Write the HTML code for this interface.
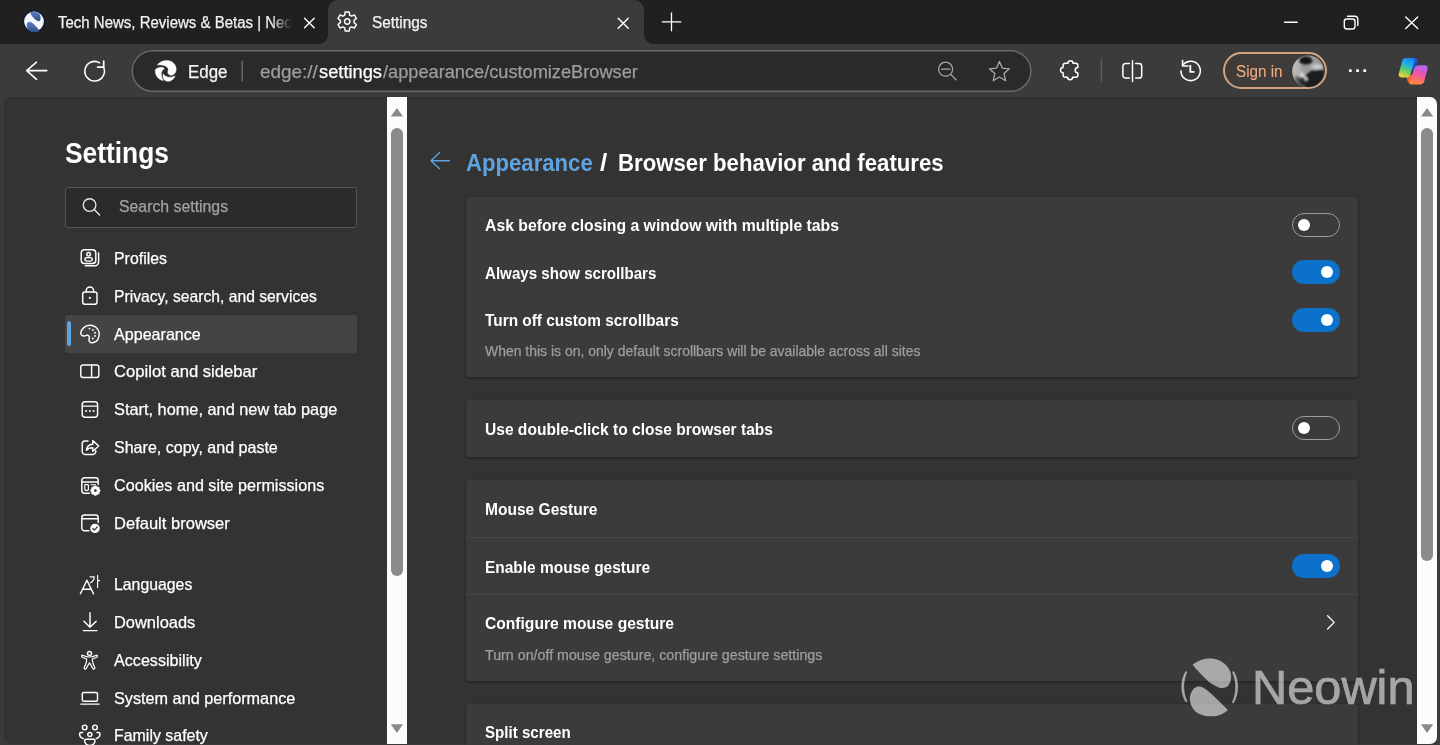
<!DOCTYPE html>
<html lang="en"><head><meta charset="utf-8"><title>Settings</title>
<style>
html,body{margin:0;padding:0}
body{width:1440px;height:745px;overflow:hidden;background:#3b3b3b;position:relative;font-family:"Liberation Sans",sans-serif;color:#fff}
.a{position:absolute}
.t{position:absolute;white-space:nowrap;line-height:1;transform-origin:0 50%}
svg{position:absolute;overflow:visible}
#tabstrip{left:0;top:0;width:1440px;height:44px;background:#202020}
#tabactive{left:328px;top:0;width:316px;height:44px;background:#3b3b3b;border-radius:10px 10px 0 0}
#tabactive:before,#tabactive:after{content:"";position:absolute;bottom:0;width:9px;height:9px}
#tabactive:before{left:-9px;background:radial-gradient(circle at 0 0,transparent 8.5px,#3b3b3b 9px)}
#tabactive:after{right:-9px;background:radial-gradient(circle at 100% 0,transparent 8.5px,#3b3b3b 9px)}
#tab1clip{left:0;top:0;width:297px;height:44px;overflow:hidden;-webkit-mask-image:linear-gradient(90deg,#000 271px,transparent 292px);mask-image:linear-gradient(90deg,#000 271px,transparent 292px)}
#omni{left:131.5px;top:50px;width:899px;height:42px;box-sizing:border-box;border:1.5px solid #6b6b6b;border-radius:21px;background:#2a2a2a}
#content{left:4px;top:97px;width:1433px;height:646.6px;background:#333;border-radius:8px;overflow:hidden;box-shadow:inset 0 1px 0 #2f2f2f}
.track{background:#fcfcfc}
.thumb{background:#8b8b8b;border-radius:6px}
#search{left:64.5px;top:187px;width:292.5px;height:40.5px;box-sizing:border-box;border:1px solid #565656;border-radius:3px;background:#2b2b2b}
#navsel{left:64.5px;top:314.5px;width:292.5px;height:38px;background:#444;border-radius:3px}
#navind{left:67px;top:320.8px;width:3.7px;height:25px;background:#5fa4e0;border-radius:2px}
.card{background:#3b3b3b;border-radius:4px;box-shadow:0 1.6px 3px rgba(0,0,0,.26),0 0 1px rgba(0,0,0,.12)}
.div{height:1px;background:#474747;left:466px;width:892px}
.tog{width:48px;height:24px;box-sizing:border-box;border-radius:12px;left:1292px}
.tog.off{border:1px solid #9c9c9c}
.tog.on{background:#0c71ca}
.tog i{position:absolute;width:12px;height:12px;border-radius:50%;background:#fff;top:50%;margin-top:-6px}
.tog.off i{left:5.2px}
.tog.on i{right:6.6px}
#signin{left:1222.5px;top:52.2px;width:104.2px;height:36.8px;box-sizing:border-box;border:2px solid #d0a383;border-radius:18.5px;background:#3e3b39}


</style></head>
<body>
<div class="a" id="tabstrip"></div>
<div class="a" id="tabactive"></div>
<div class="a" id="tab1clip"><span class="t" id="t0" style="left:58.3px;top:15.09px;font-size:15.6px;font-weight:400;color:#f2f2f2;transform:scaleX(0.9614);-webkit-text-stroke:.25px;"><span id="pfx">Tech News, Reviews &amp; Betas | </span>Neowin</span></div>
<div class="a" id="signin"></div>
<svg style="left:0;top:0" width="1440" height="100" viewBox="0 0 1440 100" fill="none" stroke="#fff" stroke-width="1.5" stroke-linecap="round" stroke-linejoin="round">
 <rect x="132.250" y="50.750" width="898.600" height="40.600" rx="20.300" fill="#2a2a2a" stroke="#686868" stroke-width="1.5"/>
 <!-- tab close buttons -->
 <path d="M304.500 18.300 L314.200 27.800 M314.200 18.300 L304.500 27.800" stroke-width="1.4"/>
 <path d="M618.200 18.200 L628.200 28.200 M628.200 18.200 L618.200 28.200" stroke-width="1.4"/>
 <!-- new tab plus -->
 <path d="M662.3 21.8 H680.8 M671.5 12.8 V30.8" stroke-width="1.3"/>
 <!-- settings gear -->
 <g transform="translate(347.2 21.5)">
  <circle r="2.7" stroke-width="1.5"/>
  <path stroke-width="1.45" d="M-2.50 -6.43 L-2.07 -9.48 L2.07 -9.48 L2.50 -6.43 L4.32 -5.38 L7.17 -6.53 L9.24 -2.95 L6.82 -1.06 L6.82 1.06 L9.24 2.95 L7.17 6.53 L4.32 5.38 L2.50 6.43 L2.07 9.48 L-2.07 9.48 L-2.50 6.43 L-4.32 5.38 L-7.17 6.53 L-9.24 2.95 L-6.82 1.06 L-6.82 -1.06 L-9.24 -2.95 L-7.17 -6.53 L-4.32 -5.38 Z"/>
 </g>
 <!-- window controls -->
 <path d="M1284.600 22.200 H1297.100" stroke-width="1.5"/>
 <rect x="1344.3" y="19" width="10.7" height="10" rx="2.4" stroke-width="1.4"/>
 <path d="M1347.6 16.2 H1354.6 A3.2 3.2 0 0 1 1357.8 19.4 V25.6" stroke-width="1.4"/>
 <path d="M1405.700 16.900 L1417.700 28.500 M1417.700 16.900 L1405.700 28.500" stroke-width="1.4"/>
 <!-- back -->
 <path d="M46.8 70.6 H26.9 M36.5 62.2 L26.7 70.6 L36.5 79.3" stroke-width="1.55"/>
 <!-- refresh -->
 <path d="M103.6 67.3 A9.8 9.8 0 1 1 99.6 62.8" stroke-width="1.55"/>
 <path d="M103.7 61 V67.2 H97.6" stroke-width="1.7"/>
 <!-- zoom out -->
 <g stroke="#a8a8a8" stroke-width="1.3">
  <circle cx="945.6" cy="69.2" r="7"/>
  <path d="M941.6 69.2 H949.7 M950.7 74.4 L956 79.8"/>
  <!-- star -->
  <path d="M999.4 61.4 L1002.3 68.1 L1009.4 68.8 L1004 73.6 L1005.6 80.7 L999.4 77 L993.2 80.7 L994.8 73.6 L989.4 68.8 L996.5 68.1 Z"/>
 </g>
 <!-- puzzle / extensions -->
 <path stroke-width="1.5" d="M1065.4 63.2 H1068 A2.5 2.5 0 0 1 1073 63.2 H1075.6 A2.3 2.3 0 0 1 1077.9 65.5 V67.6 A2.7 2.7 0 0 0 1077.9 73 V75 A2.3 2.3 0 0 1 1075.6 77.300 H1072.600 A2.5 2.5 0 0 1 1067.600 77.300 H1065.400 A2.300 2.300 0 0 1 1063.100 75 V72.800 A2.600 2.600 0 0 1 1063.100 67.600 V65.500 A2.300 2.300 0 0 1 1065.400 63.200 Z"/>
 <!-- divider -->
 <path d="M1101.3 59.5 V81" stroke="#666" stroke-width="1.1"/>
 <!-- split screen -->
 <path stroke-width="1.5" d="M1129.300 63.500 H1125.600 A2.700 2.700 0 0 0 1122.900 66.200 V75.400 A2.700 2.700 0 0 0 1125.600 78.100 H1129.300 M1135.700 63.500 H1139 A2.700 2.700 0 0 1 1141.700 66.200 V75.400 A2.700 2.700 0 0 1 1139 78.100 H1135.700 M1132.500 60.700 V81.500"/>
 <!-- history -->
 <path stroke-width="1.55" d="M1183.600 64.200 A9.700 9.700 0 1 1 1180.950 70.900"/>
 <path stroke-width="1.6" d="M1182.600 60.600 V66 H1188"/>
 <path stroke-width="1.85" d="M1190.300 65.600 V71.900 H1193.800"/>
 <!-- more dots -->
 <g fill="#fff" stroke="none"><rect x="1349" y="69.2" width="2.7" height="2.7" rx=".5"/><rect x="1356.2" y="69.2" width="2.7" height="2.7" rx=".5"/><rect x="1363.4" y="69.2" width="2.7" height="2.7" rx=".5"/></g>
 <!-- omnibox divider -->
 <path d="M242.2 61 V81" stroke="#777" stroke-width="1.2"/>
</svg>

<div class="a" id="content">
</div>
<!-- scrollbars -->
<div class="a track" style="left:387px;top:97px;width:20px;height:646.6px"></div>
<div class="a thumb" style="left:391px;top:127.5px;width:12px;height:448px"></div>
<div class="a track" style="left:1417px;top:97px;width:20px;height:646.6px;border-radius:0 7px 7px 0"></div>
<div class="a thumb" style="left:1421.3px;top:127.7px;width:11.8px;height:433px"></div>
<svg style="left:0;top:0" width="1440" height="745" viewBox="0 0 1440 745">
 <g fill="#8a8a8a">
  <path d="M396.9 107.9 L403 116.6 H390.8 Z"/>
  <path d="M396.9 733 L403 724.2 H390.8 Z"/>
  <path d="M1427.1 108 L1433.2 116.6 H1421 Z"/>
  <path d="M1427.1 733 L1433.2 724.2 H1421 Z"/>
 </g>
</svg>
<!-- sidebar -->
<div class="a" id="search"></div>
<div class="a" id="navsel"></div>
<div class="a" id="navind"></div>
<!-- main cards -->
<div class="a card" style="left:466px;top:197.3px;width:892px;height:179.4px"></div>
<div class="a card" style="left:466px;top:400px;width:892px;height:56.7px"></div>
<div class="a card" style="left:466px;top:480px;width:892px;height:200.5px"></div>
<div class="a card" style="left:466px;top:703.5px;width:892px;height:60px"></div>
<div class="a div" style="top:536.5px"></div>
<div class="a div" style="top:594px"></div>
<div class="a tog off" style="top:213px"><i></i></div>
<div class="a tog on" style="top:260px"><i></i></div>
<div class="a tog on" style="top:307.5px"><i></i></div>
<div class="a tog off" style="top:416px"><i></i></div>
<div class="a tog on" style="top:554px"><i></i></div>
<svg style="left:0;top:0" width="1440" height="745" viewBox="0 0 1440 745" fill="none" stroke="#fff" stroke-width="1.45" stroke-linecap="round" stroke-linejoin="round">
 <!-- search icon -->
 <g stroke="#e8e8e8" stroke-width="1.35"><circle cx="89.6" cy="205" r="6.3"/><path d="M94.2 209.6 L99.6 215"/></g>
 <!-- profiles -->
 <rect x="81.2" y="249.8" width="14.6" height="13.6" rx="3.2"/>
 <path d="M98.6 253 V262 A3.8 3.8 0 0 1 94.8 265.8 H85.4"/>
 <circle cx="88.6" cy="254.3" r="1.8"/>
 <rect x="84.9" y="257.6" width="7.4" height="3.5" rx="1.75"/>
 <!-- privacy lock -->
 <rect x="82.7" y="292" width="14.3" height="12.2" rx="2.2"/>
 <path d="M86.2 292 V290.6 A3.7 3.7 0 0 1 93.6 290.6 V292"/>
 <circle cx="89.85" cy="297.9" r="1.05" fill="#fff" stroke="none"/>
 <!-- appearance palette -->
 <path d="M80.8 333.2 A9.3 8.9 0 0 1 99.2 332.6 C99.6 337 97.6 342.6 92.6 342.8 C89.6 342.9 88.6 340.8 89.2 338.6 C89.8 336.4 88.4 334.6 86.4 335.4 C83.6 336.6 80.9 336 80.8 333.2 Z"/>
 <g fill="#fff" stroke="none"><circle cx="89.5" cy="328.6" r=".95"/><circle cx="92.9" cy="330" r=".95"/><circle cx="95.1" cy="332.8" r=".95"/><circle cx="95" cy="335.9" r=".95"/><circle cx="92.8" cy="338.5" r=".95"/></g>
 <!-- copilot and sidebar -->
 <rect x="80.8" y="365" width="18" height="12.5" rx="2.2"/><path d="M91.6 365 V377.5"/>
 <!-- start home new tab -->
 <rect x="82.2" y="401.8" width="15.4" height="15.4" rx="3"/><path d="M82.2 406.1 H97.6"/>
 <g fill="#fff" stroke="none"><circle cx="86.1" cy="411" r="1"/><circle cx="89.9" cy="411" r="1"/><circle cx="93.6" cy="411" r="1"/></g>
 <!-- share -->
 <path d="M88 440.9 H85 A2.8 2.8 0 0 0 82.2 443.7 V451.6 A2.8 2.8 0 0 0 85 454.4 H93 A2.8 2.8 0 0 0 95.8 451.6 V450.6"/>
 <path d="M86.4 450.2 C86.8 446.6 89.4 444.4 92.8 444.2 V440.6 L98.7 446 L92.8 451.2 V447.7 C90 447.6 87.8 448.4 86.4 450.2 Z"/>
 <!-- cookies & site permissions -->
 <path d="M89.5 493.2 H84.5 A2.7 2.7 0 0 1 81.8 490.5 V480.5 A2.7 2.7 0 0 1 84.5 477.8 H95.5 A2.7 2.7 0 0 1 98.2 480.5 V484.5 M81.8 481.9 H98.2"/>
 <rect x="84.8" y="484.6" width="3.6" height="5.8" rx=".6" stroke-width="1.1"/>
 <path d="M91 484.8 H95.6" stroke-width="1.1"/>
 <g transform="translate(95.4 490.6)"><path fill="#fff" stroke="#fff" stroke-width=".8" d="M-0.9 -4.6 H0.9 L1.3 -3.3 L2.6 -3.9 L3.9 -2.6 L3.3 -1.3 L4.6 -0.9 V0.9 L3.3 1.3 L3.9 2.6 L2.6 3.9 L1.3 3.3 L0.9 4.6 H-0.9 L-1.3 3.3 L-2.6 3.9 L-3.9 2.6 L-3.3 1.3 L-4.6 0.9 V-0.9 L-3.3 -1.3 L-3.9 -2.6 L-2.6 -3.9 L-1.3 -3.3 Z"/><circle r="1.35" fill="#333" stroke="none"/></g>
 <!-- default browser -->
 <path d="M89 530.8 H84.5 A2.7 2.7 0 0 1 81.8 528.1 V517.6 A2.7 2.7 0 0 1 84.5 514.9 H95.5 A2.7 2.7 0 0 1 98.2 517.6 V522.4 M81.8 518.7 H98.2"/>
 <circle cx="95" cy="528.4" r="4.7" fill="#fff" stroke="none"/>
 <path d="M92.8 528.5 L94.4 530.1 L97.3 526.9" stroke="#333" stroke-width="1.25"/>
 <!-- languages -->
 <path d="M80.4 593.8 L86.9 580.2 L93.5 593.8 M82.7 589.2 H91.2"/>
 <path d="M90 576.8 H94.2 C94.2 579.6 93 581.6 90.4 582.8 M97.6 575.2 V587.4 M97.6 580.6 H99.6" stroke-width="1.15"/>
 <!-- downloads -->
 <path d="M90 612.8 V627 M84 621.3 L90 627.3 L96.2 621.3 M83.3 630.6 H96.9"/>
 <!-- accessibility -->
 <circle cx="89.5" cy="653.4" r="2"/>
 <path d="M82.6 655.2 C81.6 654.8 81.2 656.8 82.2 657.2 L86.6 659 C87 661.6 85.4 665.2 84.2 667.6 C83.8 668.8 85.6 669.6 86.2 668.4 L89.5 662.8 L92.8 668.4 C93.4 669.6 95.2 668.8 94.8 667.6 C93.6 665.2 92 661.6 92.4 659 L96.8 657.2 C97.8 656.8 97.4 654.8 96.4 655.2 C93.8 656.4 91.6 657 89.5 657 C87.4 657 85.2 656.4 82.6 655.2 Z" stroke-width="1.2"/>
 <!-- system -->
 <rect x="82.3" y="692.5" width="15.2" height="8.8" rx="1.6"/><path d="M80.8 704.1 H99.1"/>
 <!-- family -->
 <circle cx="84.7" cy="727.4" r="2.3"/><circle cx="95" cy="727.4" r="2.3"/><circle cx="89.8" cy="734.4" r="2"/>
 <path d="M82.6 732.4 H81 A1.4 1.4 0 0 0 79.6 733.8 C79.6 736.2 81 738 83.4 738.6 M97 732.4 H98.6 A1.4 1.4 0 0 1 100 733.8 C100 736.2 98.600 738 96.2 738.600 M86 739.300 H93.6 A1.4 1.4 0 0 1 95 740.7 C95 743 93 745.400 89.8 745.400 C86.6 745.400 84.6 743 84.6 740.7 A1.4 1.4 0 0 1 86 739.300 Z"/>
 <!-- content back arrow -->
 <path d="M449.4 160.7 H431.2 M439.6 152.6 L431 160.7 L439.600 168.800" stroke="#5fa4e0" stroke-width="1.35"/>
 <!-- chevron -->
 <path d="M1327.600 615.800 L1334.200 622.400 L1327.600 629" stroke="#fff" stroke-width="1.3"/>
</svg>
<!-- edge logo -->
<svg style="left:150px;top:55px" width="32" height="32" viewBox="150 55 32 32">
 <g fill="#fff" stroke="#fff" stroke-width=".45" stroke-linejoin="round">
  <path d="M157.3 65 C159.600 62 163.200 60.500 167.200 60.600 C172.400 60.800 176.300 64.600 176.200 69.300 C176.100 72.600 174.400 74.700 172 75.200 C169.800 75.500 168 74.400 167.800 72.600 C167.700 71.500 168.300 70.800 168.300 69.800 C168.200 67.600 166.300 66.300 164.200 65.600 C162 64.900 159.600 64.700 157.300 65 Z"/>
  <path d="M155.400 69.600 C157 68.200 159 67.300 161 67.300 C162.400 67.300 163.600 67.800 164.400 68.700 C162.500 69.700 161.400 71.500 161.300 73.600 C161.200 76.300 162 78.600 163.200 80.500 C160.800 80.200 158.600 78.800 157.100 76.800 C155.600 74.700 155 72.100 155.400 69.600 Z"/>
  <path d="M163.200 73.700 C163.900 75.300 165.600 76.500 167.800 77 C170.400 77.500 172.900 77.100 175.100 75.900 C174.500 77.700 173.100 79.400 171.200 80.400 C169 81.600 166.600 81.600 164.800 80.300 C163.200 79 162.500 76.600 163.200 73.700 Z"/>
 </g>
</svg>
<!-- neowin favicon -->
<svg style="left:18px;top:6px" width="32" height="32" viewBox="18 6 32 32">
 <defs><linearGradient id="nwb" x1="0" y1="0" x2="0" y2="1"><stop offset="0" stop-color="#5f80c2"/><stop offset="1" stop-color="#2d4c8e"/></linearGradient></defs>
 <circle cx="34" cy="21.500" r="10.500" fill="#f4f6fb" stroke="#0c1730" stroke-width="1.2"/>
 <path fill="url(#nwb)" d="M29.800 12.400 C32.400 11.300 35.800 11.300 38.200 12.800 C40.400 14.300 41.100 17.200 40.300 20.200 C39.800 21.400 38.400 21.300 37.200 20.700 C34.400 19.300 32 16.400 29.800 12.400 Z"/>
 <path fill="url(#nwb)" d="M26.800 24 C27.600 21.800 29.600 21 31.400 22.200 C34.400 24.300 37.400 27.800 39.600 31 C37.400 32.400 34.200 32.700 31.400 31.900 C28.800 31.100 26.400 28.600 26.800 24 Z"/>
</svg>
<!-- copilot -->
<svg style="left:1394px;top:52px" width="38" height="38" viewBox="1394 52 38 38">
 <defs>
  <linearGradient id="cpA" x1=".6" y1="0" x2=".3" y2="1"><stop offset="0" stop-color="#1c86f2"/><stop offset=".32" stop-color="#22b0e6"/><stop offset=".62" stop-color="#5ccb6e"/><stop offset="1" stop-color="#f4d52c"/></linearGradient>
  <linearGradient id="cpB" x1=".6" y1="0" x2=".35" y2="1"><stop offset="0" stop-color="#b266f2"/><stop offset=".45" stop-color="#ee52a4"/><stop offset="1" stop-color="#ff8a3c"/></linearGradient>
  <linearGradient id="cpC" x1="0" y1="0" x2="1" y2="1"><stop offset="0" stop-color="#1a6ae8"/><stop offset="1" stop-color="#1a3fc0"/></linearGradient>
  <filter id="cpblur" x="-10%" y="-10%" width="120%" height="120%"><feGaussianBlur stdDeviation=".35"/></filter>
 </defs>
 <g filter="url(#cpblur)">
 <path fill="url(#cpC)" d="M1409 58 H1414.600 C1417 58 1418.200 59.600 1417.500 61.800 L1414.600 71 L1409 68 Z"/>
 <path fill="#f0642a" d="M1406 75 H1413.500 L1412 84.200 C1409.500 84.200 1408 83 1407.400 80.600 Z"/>
 <path fill="url(#cpA)" d="M1405.200 57.900 H1412.200 C1414 57.900 1414.900 59.200 1414.400 60.900 L1410.400 74.600 C1409.800 76.500 1408.400 77.400 1406.600 77.400 H1401.400 C1399.200 77.400 1398.200 75.900 1398.800 73.800 L1402.400 60.300 C1402.800 58.800 1403.800 57.900 1405.200 57.900 Z"/>
 <path fill="url(#cpB)" d="M1419.400 65.200 H1424.600 C1427 65.200 1428.200 66.800 1427.600 69 L1424.200 81.600 C1423.700 83.400 1422.300 84.400 1420.500 84.400 H1411.600 C1409.800 84.400 1409 83.100 1409.600 81.400 L1414.200 68.400 C1415 66.400 1417 65.200 1419.400 65.200 Z"/>
 </g>
</svg>
<!-- avatar -->
<svg style="left:1292px;top:55px" width="33" height="33" viewBox="0 0 33 33">
 <defs><clipPath id="avc"><circle cx="16.100" cy="16.300" r="15.900"/></clipPath>
 <linearGradient id="avg" x1="0" y1="0" x2="1" y2=".3"><stop offset="0" stop-color="#c4c4c4"/><stop offset=".55" stop-color="#a4a4a4"/><stop offset="1" stop-color="#8a8a8a"/></linearGradient>
 <filter id="avblur" x="-10%" y="-10%" width="120%" height="120%"><feGaussianBlur stdDeviation=".9"/></filter></defs>
 <g clip-path="url(#avc)">
  <rect width="33" height="33" fill="url(#avg)"/>
  <g filter="url(#avblur)">
   <path d="M18.500 15.700 L33 14.600 V33 H13 L10 23 Z" fill="#1e1e1e"/>
   <path d="M3 21 L10 23 L13 33 H5 Z" fill="#5c5c5c"/>
   <ellipse cx="25.300" cy="11.600" rx="5.600" ry="2.600" fill="#cacaca"/>
   <ellipse cx="13.500" cy="12.500" rx="4.600" ry="4.200" fill="#9a9a9a"/>
   <ellipse cx="13.800" cy="5.600" rx="6.600" ry="4.300" fill="#161616"/>
   <path d="M9 17 L16 24 L14 26 L8 20 Z" fill="#dcdcdc"/>
   <path d="M7 24 L12 22 L14 30 L9 31 Z" fill="#2a2a2a"/>
  </g>
 </g>
</svg>
<!-- neowin watermark logo -->
<svg style="left:1175px;top:652px" width="70" height="70" viewBox="1175 652 70 70">
 <g fill="rgba(255,255,255,.56)">
  <path d="M1192.600 664.800 C1197.600 660.300 1205 657.800 1212 658.500 C1219.500 659.300 1226.400 663.500 1229.800 670.500 C1231.800 675 1231.600 681 1228.400 685.600 C1226.400 688.200 1222.400 688.600 1218.800 687.400 C1213.600 685.500 1209.400 682.600 1206.100 679.300 C1201.200 674.600 1196.600 669.800 1192.600 664.800 Z"/>
  <path d="M1189.900 699.200 C1189.600 694.600 1191.600 690 1195.300 687.400 C1198.200 686 1201.600 686.600 1204.300 688.300 C1209 691.500 1213 695.400 1217 699.200 C1220.800 702.800 1224.600 706.400 1227.800 710 C1223.400 714.200 1217.600 716.500 1211.500 716.300 C1206 716.300 1200.800 715.200 1197.100 712.700 C1192.600 709.600 1190.300 704.600 1189.900 699.200 Z"/>
  <path d="M1185.600 671 C1182.800 675.800 1181.400 681.200 1181.400 686.700 C1181.400 692.200 1182.800 697.600 1185.800 702.300 L1187.400 701.300 C1185.200 696.800 1184.100 691.800 1184.100 686.700 C1184.100 681.600 1185.200 676.600 1187.200 672 Z"/>
  <path d="M1233.800 671 C1236.600 675.800 1238 681.200 1238 686.700 C1238 692.600 1236.600 698.400 1233.600 703.400 L1232 702.400 C1234.200 697.700 1235.300 692.200 1235.300 686.700 C1235.300 681.600 1234.200 676.600 1232.200 672 Z"/>
 </g>
</svg>

<span class="t" id="t1" style="left:371.7px;top:15.09px;font-size:15.6px;font-weight:400;color:#f2f2f2;transform:scaleX(0.9848);-webkit-text-stroke:.25px;">Settings</span>
<span class="t" id="t2" style="left:187.7px;top:62.59px;font-size:18.2px;font-weight:400;color:#f5f5f5;transform:scaleX(0.9298);-webkit-text-stroke:.25px;">Edge</span>
<span class="t" id="t3" style="left:260.4px;top:62.79px;font-size:18.2px;font-weight:400;color:#9d9d9d;transform:scaleX(1.0391);-webkit-text-stroke:.25px;">edge://</span>
<span class="t" id="t4" style="left:319.2px;top:62.79px;font-size:18.2px;font-weight:400;color:#fff;transform:scaleX(1.0050);-webkit-text-stroke:.25px;">settings</span>
<span class="t" id="t5" style="left:382.6px;top:62.79px;font-size:18.2px;font-weight:400;color:#9d9d9d;transform:scaleX(1.0002);-webkit-text-stroke:.25px;">/appearance/customizeBrowser</span>
<span class="t" id="t6" style="left:1236.3px;top:63.83px;font-size:15.8px;font-weight:400;color:#ecab7c;transform:scaleX(0.9625);-webkit-text-stroke:.15px;">Sign in</span>
<span class="t" id="t7" style="left:64.8px;top:139.49px;font-size:28.6px;font-weight:700;color:#fff;transform:scaleX(0.9210);">Settings</span>
<span class="t" id="t8" style="left:118.6px;top:198.20px;font-size:16.3px;font-weight:400;color:#a3a3a3;transform:scaleX(0.9721);-webkit-text-stroke:.25px;">Search settings</span>
<span class="t" id="t9" style="left:114.2px;top:249.93px;font-size:16.5px;font-weight:400;color:#fff;transform:scaleX(0.9631);-webkit-text-stroke:.25px;">Profiles</span>
<span class="t" id="t10" style="left:114.2px;top:288.03px;font-size:16.5px;font-weight:400;color:#fff;transform:scaleX(0.9505);-webkit-text-stroke:.25px;">Privacy, search, and services</span>
<span class="t" id="t11" style="left:114.2px;top:325.53px;font-size:16.5px;font-weight:400;color:#fff;transform:scaleX(0.9753);-webkit-text-stroke:.25px;">Appearance</span>
<span class="t" id="t12" style="left:114.2px;top:363.23px;font-size:16.5px;font-weight:400;color:#fff;transform:scaleX(1.0078);-webkit-text-stroke:.25px;">Copilot and sidebar</span>
<span class="t" id="t13" style="left:114.2px;top:401.03px;font-size:16.5px;font-weight:400;color:#fff;transform:scaleX(0.9896);-webkit-text-stroke:.25px;">Start, home, and new tab page</span>
<span class="t" id="t14" style="left:114.2px;top:439.03px;font-size:16.5px;font-weight:400;color:#fff;transform:scaleX(0.9722);-webkit-text-stroke:.25px;">Share, copy, and paste</span>
<span class="t" id="t15" style="left:114.2px;top:477.03px;font-size:16.5px;font-weight:400;color:#fff;transform:scaleX(0.9799);-webkit-text-stroke:.25px;">Cookies and site permissions</span>
<span class="t" id="t16" style="left:114.2px;top:514.63px;font-size:16.5px;font-weight:400;color:#fff;transform:scaleX(1.0021);-webkit-text-stroke:.25px;">Default browser</span>
<span class="t" id="t17" style="left:114.2px;top:576.03px;font-size:16.5px;font-weight:400;color:#fff;transform:scaleX(0.9587);-webkit-text-stroke:.25px;">Languages</span>
<span class="t" id="t18" style="left:114.2px;top:614.03px;font-size:16.5px;font-weight:400;color:#fff;transform:scaleX(0.9958);-webkit-text-stroke:.25px;">Downloads</span>
<span class="t" id="t19" style="left:114.2px;top:652.03px;font-size:16.5px;font-weight:400;color:#fff;transform:scaleX(0.9771);-webkit-text-stroke:.25px;">Accessibility</span>
<span class="t" id="t20" style="left:114.2px;top:689.53px;font-size:16.5px;font-weight:400;color:#fff;transform:scaleX(0.9835);-webkit-text-stroke:.25px;">System and performance</span>
<span class="t" id="t21" style="left:114.2px;top:727.33px;font-size:16.5px;font-weight:400;color:#fff;transform:scaleX(0.9651);-webkit-text-stroke:.25px;">Family safety</span>
<span class="t" id="t22" style="left:466.3px;top:151.96px;font-size:23.2px;font-weight:700;color:#5fa4e0;transform:scaleX(0.9544);">Appearance</span>
<span class="t" id="t23" style="left:600.2px;top:151.96px;font-size:23.2px;font-weight:700;color:#fff;transform:scaleX(1.1312);">/</span>
<span class="t" id="t24" style="left:618.3px;top:151.96px;font-size:23.2px;font-weight:700;color:#fff;transform:scaleX(0.9574);">Browser behavior and features</span>
<span class="t" id="t25" style="left:485.3px;top:218.16px;font-size:16px;font-weight:700;color:#fff;transform:scaleX(0.9856);">Ask before closing a window with multiple tabs</span>
<span class="t" id="t26" style="left:485.3px;top:265.76px;font-size:16px;font-weight:700;color:#fff;transform:scaleX(0.9448);">Always show scrollbars</span>
<span class="t" id="t27" style="left:485.3px;top:313.16px;font-size:16px;font-weight:700;color:#fff;transform:scaleX(0.9612);">Turn off custom scrollbars</span>
<span class="t" id="t28" style="left:485.3px;top:421.76px;font-size:16px;font-weight:700;color:#fff;transform:scaleX(0.9727);">Use double-click to close browser tabs</span>
<span class="t" id="t29" style="left:485.3px;top:501.76px;font-size:16px;font-weight:700;color:#fff;transform:scaleX(0.9724);">Mouse Gesture</span>
<span class="t" id="t30" style="left:485.3px;top:559.76px;font-size:16px;font-weight:700;color:#fff;transform:scaleX(0.9665);">Enable mouse gesture</span>
<span class="t" id="t31" style="left:485.3px;top:616.46px;font-size:16px;font-weight:700;color:#fff;transform:scaleX(0.9752);">Configure mouse gesture</span>
<span class="t" id="t32" style="left:485.3px;top:725.16px;font-size:16px;font-weight:700;color:#fff;transform:scaleX(0.9448);">Split screen</span>
<span class="t" id="t33" style="left:485.3px;top:344.35px;font-size:14px;font-weight:400;color:#9e9e9e;transform:scaleX(0.9974);-webkit-text-stroke:.25px;">When this is on, only default scrollbars will be available across all sites</span>
<span class="t" id="t34" style="left:485.3px;top:648.35px;font-size:14px;font-weight:400;color:#9e9e9e;transform:scaleX(1.0177);-webkit-text-stroke:.25px;">Turn on/off mouse gesture, configure gesture settings</span>
<span class="t" id="t35" style="left:1251.8px;top:664.25px;font-size:47.2px;font-weight:400;color:#fff;transform:scaleX(1.0326);opacity:.56;-webkit-text-stroke:.7px #fff;">Neowin</span>

</body></html>
